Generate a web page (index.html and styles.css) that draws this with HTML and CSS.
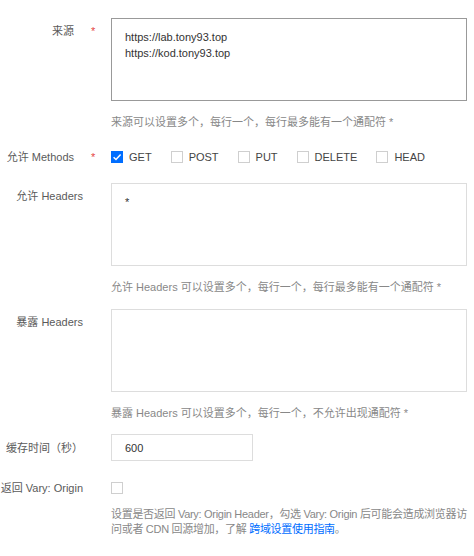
FILE: index.html
```html
<!DOCTYPE html>
<html lang="zh-CN">
<head>
<meta charset="utf-8">
<title>跨域设置</title>
<link rel="stylesheet" href="styles.css">
</head>
<body>
<form class="form">
  <div class="row row-first">
    <div class="label req"><span>来源</span><span class="star">*</span></div>
    <div class="content">
      <textarea class="area area-focus">https://lab.tony93.top
https://kod.tony93.top</textarea>
      <div class="help">来源可以设置多个，每行一个，每行最多能有一个通配符 *</div>
    </div>
  </div>

  <div class="row row-methods">
    <div class="label req label-methods"><span>允许 Methods</span><span class="star">*</span></div>
    <div class="content methods">
      <label class="check"><span class="box box-on"><svg viewBox="0 0 12 12" width="12" height="12"><path d="M2.6 6.2 L5 8.5 L9.6 3.6" fill="none" stroke="#fff" stroke-width="1.5"/></svg></span>GET</label>
      <label class="check"><span class="box"></span>POST</label>
      <label class="check"><span class="box"></span>PUT</label>
      <label class="check"><span class="box"></span>DELETE</label>
      <label class="check"><span class="box"></span>HEAD</label>
    </div>
  </div>

  <div class="row row-allow">
    <div class="label"><span>允许 Headers</span></div>
    <div class="content">
      <textarea class="area">*</textarea>
      <div class="help">允许 Headers 可以设置多个，每行一个，每行最多能有一个通配符 *</div>
    </div>
  </div>

  <div class="row row-expose">
    <div class="label"><span>暴露 Headers</span></div>
    <div class="content">
      <textarea class="area"></textarea>
      <div class="help">暴露 Headers 可以设置多个，每行一个，不允许出现通配符 *</div>
    </div>
  </div>

  <div class="row row-cache">
    <div class="label label-input"><span>缓存时间（秒）</span></div>
    <div class="content">
      <input class="input" type="text" value="600">
    </div>
  </div>

  <div class="row row-vary">
    <div class="label label-vary"><span>返回 Vary: Origin</span></div>
    <div class="content">
      <div class="vary-check"><span class="box"></span></div>
      <p class="help help-multi">设置是否返回 Vary: Origin Header，勾选 Vary: Origin 后可能会造成浏览器访问或者 CDN 回源增加，了解 <a class="link" href="#">跨域设置使用指南</a>。</p>
    </div>
  </div>
</form>
</body>
</html>
```

FILE: styles.css
```css
* {
  box-sizing: border-box;
}

html, body {
  margin: 0;
  padding: 0;
  background: #fff;
}

body {
  font-family: "Liberation Sans", "Noto Sans CJK SC", sans-serif;
  font-size: 11px;
  color: #333;
}

.form {
  width: 474px;
  padding: 18px 7px 0 0;
}

.row {
  display: grid;
  grid-template-columns: 111px 1fr;
  align-items: start;
}

.row-methods { margin-top: 15px; }
.row-allow { margin-top: 16px; }
.row-expose { margin-top: 12px; }
.row-cache { margin-top: 11px; }
.row-vary { margin-top: 19px; }

.label {
  display: flex;
  justify-content: flex-end;
  align-items: center;
  padding: 5px 28px 0 0;
  line-height: 16px;
  color: #5a5a5a;
  white-space: nowrap;
}

.label.req {
  padding-right: 15px;
}

.label-methods {
  padding-top: 0;
  height: 20px;
}

.label-vary {
  padding-top: 0;
  height: 16px;
}

.label-input {
  padding-top: 6px;
}

.star {
  color: #e54545;
  margin-left: 17px;
  width: 5px;
}

.content {
  min-width: 0;
}

.area {
  display: block;
  width: 100%;
  height: 83px;
  margin: 0;
  padding: 10px 13px 9px;
  border: 1px solid #dddddd;
  border-radius: 0;
  resize: none;
  outline: none;
  font-family: "Liberation Sans", "Noto Sans CJK SC", sans-serif;
  font-size: 11px;
  line-height: 16px;
  color: #333;
  background: #fff;
}

.area-focus {
  border-color: #999;
}

.help {
  margin: 11px 0 0;
  line-height: 20px;
  color: #888;
}

.help-multi {
  margin: 11px -4px 0 0;
  line-height: 15px;
  letter-spacing: -0.3px;
}

.link {
  color: #006eff;
  text-decoration: none;
}

.methods {
  display: flex;
  align-items: center;
  gap: 19px;
  height: 20px;
}

.check {
  display: flex;
  align-items: center;
  gap: 6px;
  color: #444;
  line-height: 16px;
}

.box {
  display: block;
  width: 12px;
  height: 12px;
  border: 1px solid #cfcfcf;
  background: #fff;
  flex: none;
}

.box-on {
  border-color: #006eff;
  background: #006eff;
  position: relative;
}

.box-on svg {
  position: absolute;
  left: -1px;
  top: -1px;
}

.input {
  display: block;
  width: 142px;
  height: 27px;
  margin: 0;
  padding: 0 13px;
  border: 1px solid #dddddd;
  border-radius: 0;
  outline: none;
  font-family: "Liberation Sans", "Noto Sans CJK SC", sans-serif;
  font-size: 11px;
  color: #333;
  background: #fff;
}

.vary-check {
  height: 16px;
  display: flex;
  align-items: center;
}
```
